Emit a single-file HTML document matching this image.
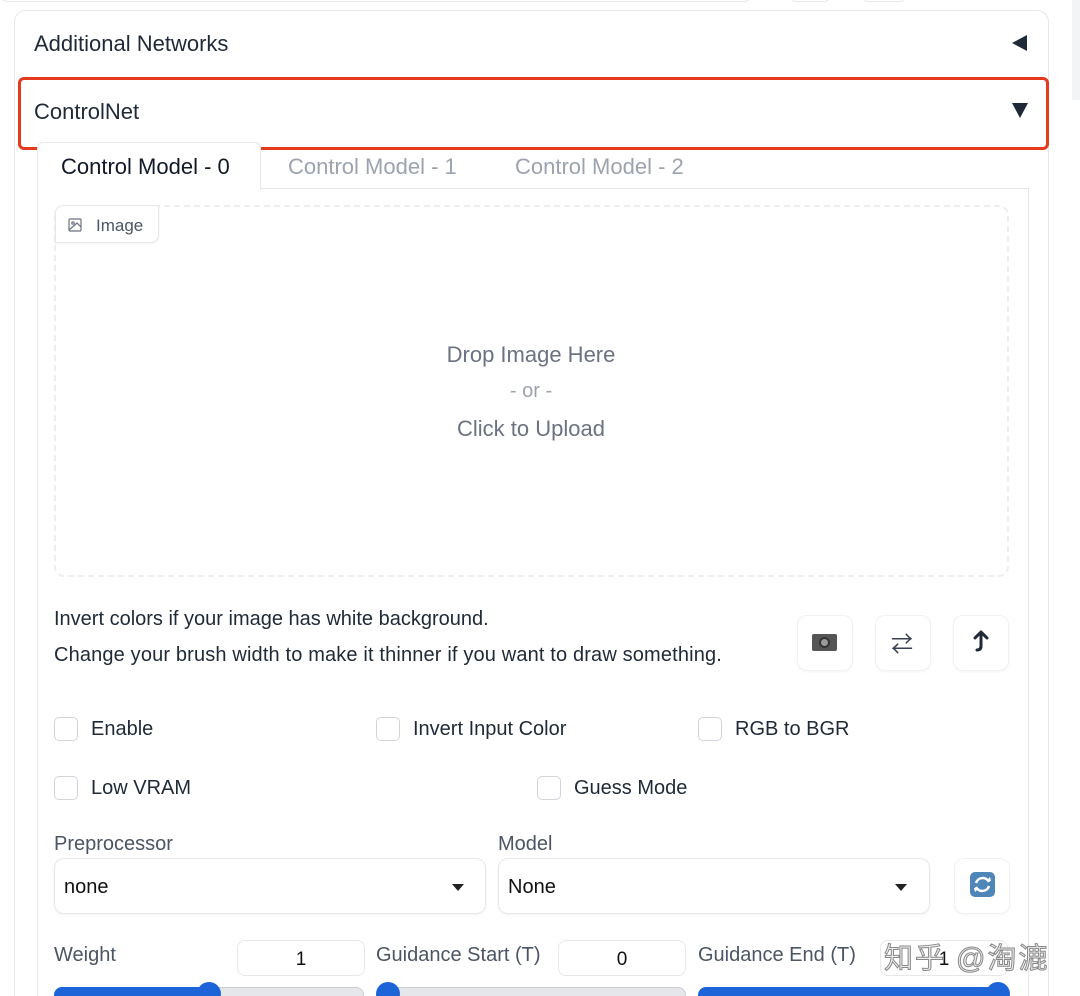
<!DOCTYPE html>
<html><head><meta charset="utf-8"><style>
*{box-sizing:border-box;margin:0;padding:0}
html,body{width:1080px;height:996px;overflow:hidden}
body{background:#fff;font-family:"Liberation Sans","Noto Sans CJK SC",sans-serif;color:#374151;position:relative}
.a{position:absolute}
.t{font-size:20px;white-space:nowrap}
.cb{position:absolute;width:24px;height:24px;border:1.5px solid #d1d5db;border-radius:5px;background:#fff}
.btn{position:absolute;width:56px;height:56px;border:1px solid #f0f1f3;border-radius:10px;background:#fff;box-shadow:0 1px 2px rgba(0,0,0,.04)}
.sel{position:absolute;height:56px;border:1.5px solid #e5e7eb;border-radius:10px;background:#fff;box-shadow:0 1px 2px rgba(0,0,0,.05)}
.num{position:absolute;height:36px;border:1.5px solid #e5e7eb;border-radius:8px;background:#fff;text-align:center;font-size:19px;line-height:38px;color:#111}
</style></head><body>
<div class="a" style="left:0;top:-20px;width:752px;height:22px;border:1px solid #e5e7eb;border-radius:8px"></div>
<div class="a" style="left:790px;top:-20px;width:40px;height:22px;border:1px solid #e5e7eb;border-radius:6px"></div>
<div class="a" style="left:862px;top:-20px;width:44px;height:22px;border:1px solid #e5e7eb;border-radius:6px"></div>
<div class="a" style="left:1072px;top:0;width:8px;height:100px;background:#f3f4f6"></div>

<div class="a" style="left:14px;top:10px;width:1035px;height:1010px;border:1.5px solid #e5e7eb;border-radius:12px"></div>
<div class="a t" style="left:34px;top:31px;font-size:22px;color:#1f2937">Additional Networks</div>
<div class="a" style="left:1012px;top:35px;width:0;height:0;border-top:8px solid transparent;border-bottom:8px solid transparent;border-right:15px solid #1f2937"></div>

<div class="a" style="left:18px;top:77px;width:1031px;height:73px;border:3px solid #e63a1e;border-radius:6px"></div>
<div class="a t" style="left:34px;top:99px;font-size:22px;color:#1f2937">ControlNet</div>
<div class="a" style="left:1012px;top:103px;width:0;height:0;border-left:8px solid transparent;border-right:8px solid transparent;border-top:15px solid #1f2937"></div>

<div class="a" style="left:37px;top:188px;width:992px;height:820px;border:1.5px solid #e5e7eb"></div>
<div class="a" style="left:37px;top:142px;width:224px;height:48px;border:1.5px solid #e5e7eb;border-bottom:none;background:#fff;border-radius:6px 6px 0 0"></div>
<div class="a t" style="left:61px;top:154px;font-size:22px;color:#111827">Control Model - 0</div>
<div class="a t" style="left:288px;top:154px;font-size:22px;color:#9ca3af">Control Model - 1</div>
<div class="a t" style="left:515px;top:154px;font-size:22px;color:#9ca3af">Control Model - 2</div>

<div class="a" style="left:54px;top:205px;width:955px;height:372px;border:2px dashed #eceef1;border-radius:10px"></div>
<div class="a" style="left:55px;top:205px;width:104px;height:38px;border:1px solid #e5e7eb;border-radius:8px 0 8px 0;background:#fff;box-shadow:0 1px 2px rgba(0,0,0,.06)"></div>
<svg class="a" style="left:68px;top:218px" width="14" height="14" viewBox="0 0 14 14" fill="none" stroke="#6b7280" stroke-width="1.2"><rect x="1" y="1" width="12" height="12" rx="1"/><circle cx="5" cy="5" r="1.2"/><path d="M1 12 L9 5 L13 9"/></svg>
<div class="a t" style="left:96px;top:216px;font-size:17px;color:#4b5563">Image</div>
<div class="a t" style="left:0;width:1062px;text-align:center;top:342px;font-size:22px;color:#6b7280">Drop Image Here</div>
<div class="a t" style="left:0;width:1062px;text-align:center;top:380px;font-size:20px;color:#9ca3af">- or -</div>
<div class="a t" style="left:0;width:1062px;text-align:center;top:416px;font-size:22px;color:#6b7280">Click to Upload</div>

<div class="a t" style="left:54px;top:608px;color:#1f2937">Invert colors if your image has white background.</div>
<div class="a t" style="left:54px;top:644px;color:#1f2937;letter-spacing:0.15px">Change your brush width to make it thinner if you want to draw something.</div>
<div class="btn" style="left:797px;top:615px"></div>
<div class="a" style="left:812px;top:634px;width:25px;height:17px;background:#555;border-radius:2px"><div style="position:absolute;left:7px;top:3px;width:11px;height:11px;border-radius:50%;background:#999;border:2px solid #333"></div></div>
<div class="btn" style="left:875px;top:615px"></div>
<div class="a" style="left:891px;top:627px;font-size:22px;color:#374151">⇄</div>
<div class="btn" style="left:953px;top:615px"></div>
<svg class="a" style="left:971px;top:630px" width="20" height="24" viewBox="0 0 20 24" fill="none" stroke="#1f2937" stroke-width="3" stroke-linecap="round" stroke-linejoin="round"><path d="M4 8 L10 2 L16 8 M10 3 V16 Q10 20 6 20"/></svg>

<div class="cb" style="left:54px;top:717px"></div><div class="a t" style="left:91px;top:718px;color:#1f2937">Enable</div>
<div class="cb" style="left:376px;top:717px"></div><div class="a t" style="left:413px;top:718px;color:#1f2937">Invert Input Color</div>
<div class="cb" style="left:698px;top:717px"></div><div class="a t" style="left:735px;top:718px;color:#1f2937">RGB to BGR</div>
<div class="cb" style="left:54px;top:776px"></div><div class="a t" style="left:91px;top:777px;color:#1f2937">Low VRAM</div>
<div class="cb" style="left:537px;top:776px"></div><div class="a t" style="left:574px;top:777px;color:#1f2937">Guess Mode</div>

<div class="a t" style="left:54px;top:833px;color:#4b5563">Preprocessor</div>
<div class="a t" style="left:498px;top:833px;color:#4b5563">Model</div>
<div class="sel" style="left:54px;top:858px;width:432px"></div>
<div class="a t" style="left:64px;top:876px;color:#111">none</div>
<div class="a" style="left:452px;top:884px;border-left:6px solid transparent;border-right:6px solid transparent;border-top:7px solid #222"></div>
<div class="sel" style="left:498px;top:858px;width:432px"></div>
<div class="a t" style="left:508px;top:876px;color:#111">None</div>
<div class="a" style="left:895px;top:884px;border-left:6px solid transparent;border-right:6px solid transparent;border-top:7px solid #222"></div>
<div class="btn" style="left:954px;top:858px"></div>
<svg class="a" style="left:970px;top:872px" width="25" height="25" viewBox="0 0 25 25"><rect width="25" height="25" rx="5" fill="#4f86b8"/><path d="M6 11 A7 7 0 0 1 19 10" fill="none" stroke="#fff" stroke-width="2.5"/><path d="M19 14 A7 7 0 0 1 6 15" fill="none" stroke="#fff" stroke-width="2.5"/><path d="M16 9 L21 9 L20 5Z M9 16 L4 16 L5 20Z" fill="#fff"/></svg>

<div class="a t" style="left:54px;top:944px;color:#4b5563">Weight</div>
<div class="num" style="left:237px;top:940px;width:128px">1</div>
<div class="a t" style="left:376px;top:944px;color:#4b5563">Guidance Start (T)</div>
<div class="num" style="left:558px;top:940px;width:128px">0</div>
<div class="a t" style="left:698px;top:944px;color:#4b5563">Guidance End (T)</div>
<div class="num" style="left:880px;top:940px;width:128px">1</div>
<div class="a t" style="left:884px;top:935px;font-size:29px;letter-spacing:2px;color:#eee;-webkit-text-stroke:1px #888">知乎 @淘漉</div>

<div class="a" style="left:54px;top:987px;width:310px;height:16px;border-radius:8px;background:#e5e7eb;border:1px solid #ccc"></div>
<div class="a" style="left:54px;top:987px;width:155px;height:16px;border-radius:8px 0 0 8px;background:#1d64d8"></div>
<div class="a" style="left:197px;top:982px;width:24px;height:24px;border-radius:50%;background:#1d64d8"></div>
<div class="a" style="left:376px;top:987px;width:310px;height:16px;border-radius:8px;background:#e5e7eb;border:1px solid #ccc"></div>
<div class="a" style="left:376px;top:982px;width:24px;height:24px;border-radius:50%;background:#1d64d8"></div>
<div class="a" style="left:698px;top:987px;width:310px;height:16px;border-radius:8px;background:#1d64d8"></div>
<div class="a" style="left:986px;top:982px;width:24px;height:24px;border-radius:50%;background:#1d64d8"></div>
</body></html>
